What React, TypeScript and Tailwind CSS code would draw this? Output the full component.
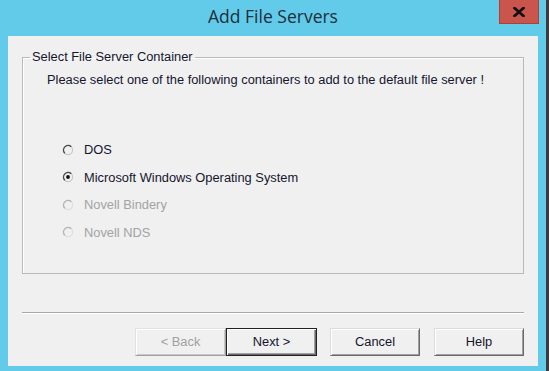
import React from "react";

function Radio({ checked, disabled }: { checked?: boolean; disabled?: boolean }) {
  const dark = disabled ? "#b4b4b4" : "#4a4a4a";
  const light = disabled ? "#dedede" : "#c8c8c8";
  return (
    <svg width="12" height="12" viewBox="0 0 12 12" className="shrink-0">
      <circle cx="6" cy="6" r="4.6" fill="none" stroke={light} strokeWidth="1.2" />
      <path d="M9.25 2.75 A4.6 4.6 0 0 0 2.75 9.25" fill="none" stroke={dark} strokeWidth="1.4" />
      {checked && <circle cx="6" cy="6" r="1.9" fill="#111" />}
    </svg>
  );
}

function RadioRow({ label, checked, disabled }: { label: string; checked?: boolean; disabled?: boolean }) {
  return (
    <div className="h-[27.5px] flex items-center gap-[10px]">
      <Radio checked={checked} disabled={disabled} />
      <span className={disabled ? "text-[#a3a3a3]" : "text-[#15152e]"}>{label}</span>
    </div>
  );
}

export default function App() {
  const font = { fontFamily: '"Liberation Sans", Arial, sans-serif' };
  return (
    <div className="w-[549px] h-[371px] flex bg-[#62cbea] overflow-hidden" style={font}>
      <div className="w-[546px] h-full flex flex-col">
        {/* title bar */}
        <div className="h-[36px] flex items-start shrink-0">
          <div className="flex-1" />
          <div
            className="pt-[4px] pl-[7px] text-[17.5px] leading-[24px] text-[#1d2f3c]"
            style={{ fontFamily: '"Open Sans", "Noto Sans", sans-serif' }}
          >
            Add File Servers
          </div>
          <div className="flex-1 flex justify-end pr-[7px]">
            <div className="w-[40px] h-[24px] bg-[#c9554d] border-b border-l border-r border-[#a9423b] flex items-center justify-center">
              <svg width="12" height="10" viewBox="0 0 12 10">
                <path d="M1.5 1 L10.5 9 M10.5 1 L1.5 9" stroke="#111" strokeWidth="2.6" strokeLinecap="square" />
              </svg>
            </div>
          </div>
        </div>
        {/* client */}
        <div className="mx-[8px] mb-[5px] flex-1 bg-[#f0f0f0] flex flex-col px-[14px] pt-[14px] text-[12.85px] text-[#15152e]">
          <fieldset className="h-[224px] border border-[#b9b9b9] shadow-[inset_1px_1px_0_#fff]">
            <legend className="ml-[7px] px-[2px] leading-[14px] text-[#15152e]">Select File Server Container</legend>
            <div className="mt-[9px] pl-[24px] leading-[14px]">
              Please select one of the following containers to add to the default file server !
            </div>
            <div className="mt-[49px] pl-[39px] flex flex-col">
              <RadioRow label="DOS" />
              <RadioRow label="Microsoft Windows Operating System" checked />
              <RadioRow label="Novell Bindery" disabled />
              <RadioRow label="Novell NDS" disabled />
            </div>
          </fieldset>
          <div className="mt-[38px] h-[2px] border-t border-[#a8a8a8] border-b border-b-white" />
          <div className="mt-[14px] flex justify-end">
            <button className="w-[91px] h-[28px] border border-t-[#e2e2e2] border-l-[#e2e2e2] border-b-[#a0a0a0] border-r-[#a0a0a0] shadow-[inset_1px_1px_0_#fff,inset_-1px_-1px_0_#c8c8c8] text-[#a0a0a0] bg-[#f0f0f0]">
              &lt; Back
            </button>
            <button className="w-[91px] h-[28px] border border-[#222] shadow-[inset_1px_1px_0_#fff,inset_-1px_-1px_0_#696969,inset_-2px_-2px_0_#a0a0a0] text-[#15152e] bg-[#f0f0f0]">
              Next &gt;
            </button>
            <button className="ml-[13px] w-[90px] h-[28px] border border-t-[#dcdcdc] border-l-[#dcdcdc] border-b-[#696969] border-r-[#696969] shadow-[inset_1px_1px_0_#fff,inset_-1px_-1px_0_#a0a0a0] text-[#15152e] bg-[#f0f0f0]">
              Cancel
            </button>
            <button className="ml-[14px] w-[90px] h-[28px] border border-t-[#dcdcdc] border-l-[#dcdcdc] border-b-[#696969] border-r-[#696969] shadow-[inset_1px_1px_0_#fff,inset_-1px_-1px_0_#a0a0a0] text-[#15152e] bg-[#f0f0f0]">
              Help
            </button>
          </div>
        </div>
      </div>
      <div className="w-[3px] h-full bg-[#3b3b3b]" />
    </div>
  );
}
